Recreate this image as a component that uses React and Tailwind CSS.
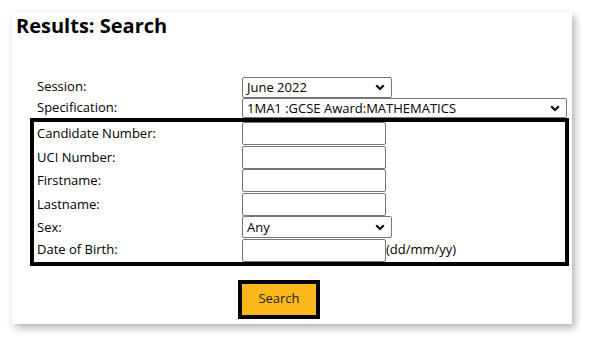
import React from "react";

function Chevron() {
  return (
    <svg width="10" height="7" viewBox="0 0 10 7" className="shrink-0">
      <path d="M1.2 1.3 L5 5 L8.8 1.3" fill="none" stroke="#111" strokeWidth="2.2" />
    </svg>
  );
}

function FakeSelect({ value, w, h }) {
  return (
    <div
      className={`flex items-center justify-between border border-[#767676] rounded-[2px] bg-white pl-[4px] pr-[6px] text-[13px] text-black leading-none ${w} ${h}`}
    >
      <span>{value}</span>
      <Chevron />
    </div>
  );
}

function Input({ w = "w-[144px]" }) {
  return <div className={`${w} h-[23px] border border-[#767676] rounded-[2px] bg-white`} />;
}

export default function App() {
  const font = { fontFamily: '"Open Sans", "Noto Sans", sans-serif' };
  return (
    <div className="w-[590px] h-[342px] bg-white pt-[12px] pl-[12px]" style={font}>
      <div className="w-[560px] h-[312px] bg-white shadow-[3px_4px_8px_rgba(0,0,0,0.3)]">
        <h1 className="pl-[4px] text-[20px] leading-[28px] font-bold text-black">Results: Search</h1>
        <div className="pl-[18px] pt-[36px]">
          <div className="flex items-center h-[22px]">
            <div className="w-[212px] pl-[7px] text-[13px] text-black">Session:</div>
            <FakeSelect value="June 2022" w="w-[150px]" h="h-[21px]" />
          </div>
          <div className="flex items-center h-[20px]">
            <div className="w-[212px] pl-[7px] text-[13px] text-black">Specification:</div>
            <FakeSelect value="1MA1 :GCSE Award:MATHEMATICS" w="w-[325px]" h="h-[20px]" />
          </div>
          <div className="w-[539px] border-[4px] border-black">
            {["Candidate Number:", "UCI Number:", "Firstname:", "Lastname:"].map((l) => (
              <div key={l} className="flex items-center h-[23.5px]">
                <div className="w-[208px] pl-[3px] text-[13px] text-black">{l}</div>
                <Input />
              </div>
            ))}
            <div className="flex items-center h-[22.5px]">
              <div className="w-[208px] pl-[3px] text-[13px] text-black">Sex:</div>
              <FakeSelect value="Any" w="w-[150px]" h="h-[22px]" />
            </div>
            <div className="flex items-center h-[23px]">
              <div className="w-[208px] pl-[3px] text-[13px] text-black">Date of Birth:</div>
              <Input />
              <span className="text-[13px] text-black">(dd/mm/yy)</span>
            </div>
          </div>
        </div>
        <div className="pl-[226px] pt-[14px]">
          <button className="w-[82px] h-[39px] border-[4px] border-black bg-[#fdb81c] text-[13px] text-[#222]">
            Search
          </button>
        </div>
      </div>
    </div>
  );
}
